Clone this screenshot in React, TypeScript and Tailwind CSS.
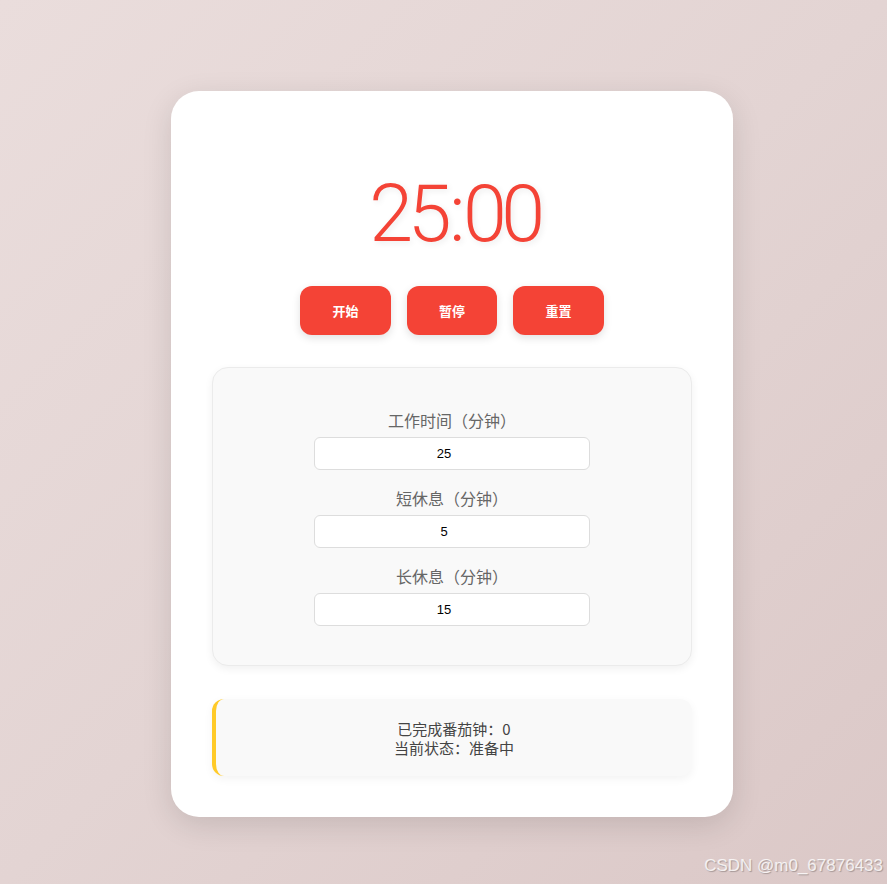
import React, { useState } from "react";

const cjk = "font-['Microsoft_YaHei','Noto_Sans_CJK_SC',sans-serif]";

const Field: React.FC<{ label: string; value: string; onChange: (v: string) => void }> = (props) => {
  return (
    <div className="flex flex-col items-center">
      <label className={`text-[16px] leading-[22px] text-[#666] ${cjk}`}>{props.label}</label>
      <input
        type="number"
        value={props.value}
        onChange={(e) => props.onChange(e.target.value)}
        className="mt-[6px] w-[276px] h-[33px] bg-white border border-[#ddd] rounded-[6px] text-center pr-[16px] text-[13px] text-black font-['Liberation_Sans',Arial,sans-serif] focus:outline-none [appearance:textfield] [&::-webkit-inner-spin-button]:appearance-none"
      />
    </div>
  );
};

export default function App() {
  const [work, setWork] = useState("25");
  const [shortBreak, setShortBreak] = useState("5");
  const [longBreak, setLongBreak] = useState("15");

  return (
    <div className="relative min-h-[884px] w-full bg-[linear-gradient(135deg,#eadddc_0%,#e3d4d3_50%,#dbc8c7_100%)] pt-[91px]">
      <div className="ml-[171px] w-[562px] bg-white rounded-[28px] shadow-[0_8px_30px_rgba(0,0,0,0.12)] px-[41px] pt-[40px] pb-[41px]">
        <div className="h-[133px] flex items-end justify-center pb-[10px]">
          <div className="text-[79px] leading-none font-light tracking-[-5.5px] pl-[5px] text-[#f44336] font-['Segoe_UI','Roboto',sans-serif] [text-shadow:2px_2px_6px_rgba(0,0,0,0.08)]">
            25<span className="mx-[3px]">:</span>00
          </div>
        </div>
        <div className="mt-[22px] flex justify-center gap-[16px]">
          {["开始", "暂停", "重置"].map((t, i) => (
            <button
              key={t}
              className={`${i === 1 ? "w-[90px]" : "w-[91px]"} h-[49px] rounded-[12px] bg-[#f44336] text-white text-[13px] font-bold shadow-[0_3px_8px_rgba(0,0,0,0.12)] ${cjk}`}
            >
              {t}
            </button>
          ))}
        </div>
        <div className="mt-[32px] h-[299px] bg-[#f9f9f9] border border-[#ebebeb] rounded-[16px] shadow-[0_3px_8px_rgba(0,0,0,0.06)] pt-[41px] flex flex-col gap-[17px]">
          <Field label="工作时间（分钟）" value={work} onChange={setWork} />
          <Field label="短休息（分钟）" value={shortBreak} onChange={setShortBreak} />
          <Field label="长休息（分钟）" value={longBreak} onChange={setLongBreak} />
        </div>
        <div className="mt-[33px] h-[77px] bg-[#f9f9f9] rounded-[12px] border-l-[4px] border-[#ffca28] shadow-[0_3px_10px_rgba(0,0,0,0.05)] flex flex-col items-center justify-center">
          <div className={`text-[15px] leading-[19px] text-[#444] ${cjk}`}>已完成番茄钟：0</div>
          <div className={`text-[15px] leading-[19px] text-[#444] ${cjk}`}>当前状态：准备中</div>
        </div>
      </div>
      <div className="absolute right-[4px] bottom-[6px] text-[17px] text-white/80 font-['Liberation_Sans',Arial,sans-serif] [text-shadow:1px_1px_1px_rgba(0,0,0,0.25)]">
        CSDN @m0_67876433
      </div>
    </div>
  );
}
